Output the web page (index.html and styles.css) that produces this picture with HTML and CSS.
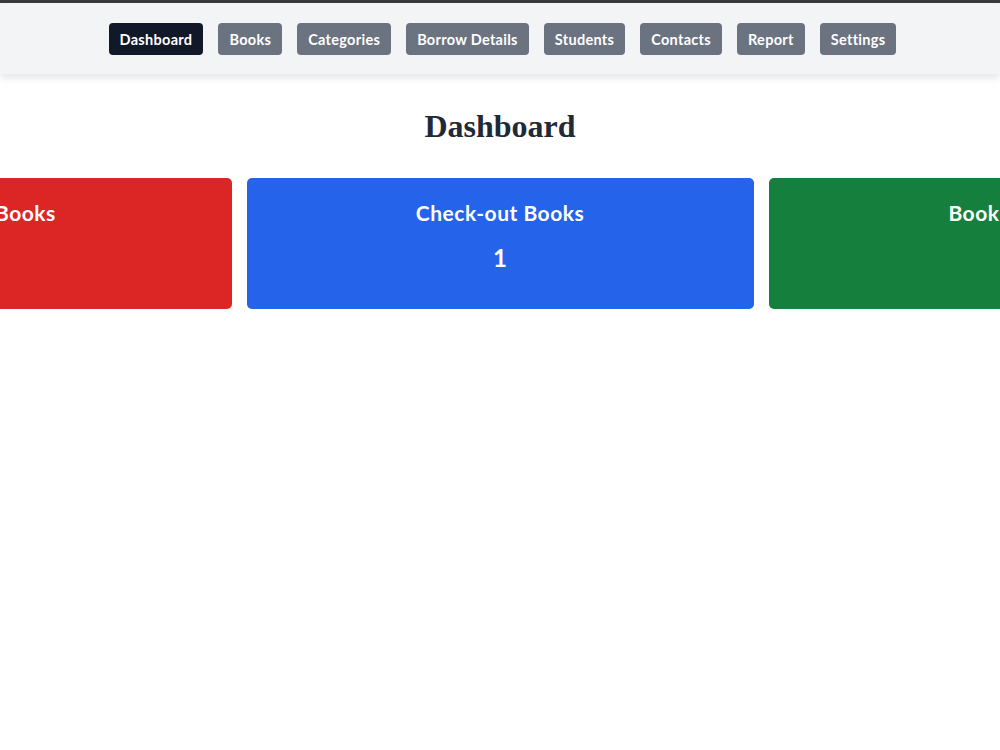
FILE: index.html
```html
<!DOCTYPE html>
<html lang="en">
<head>
<meta charset="utf-8">
<title>Dashboard</title>
<link rel="stylesheet" href="styles.css">
</head>
<body>
<div class="topline"></div>
<nav class="navbar">
  <a class="nav-btn active" href="#">Dashboard</a>
  <a class="nav-btn" href="#">Books</a>
  <a class="nav-btn" href="#">Categories</a>
  <a class="nav-btn" href="#">Borrow Details</a>
  <a class="nav-btn" href="#">Students</a>
  <a class="nav-btn" href="#">Contacts</a>
  <a class="nav-btn" href="#">Report</a>
  <a class="nav-btn" href="#">Settings</a>
</nav>
<main class="content">
  <h1 class="page-title">Dashboard</h1>
  <div class="cards">
    <div class="card card-red">
      <h2 class="card-title">Available Books</h2>
      <p class="card-value">5</p>
    </div>
    <div class="card card-blue">
      <h2 class="card-title">Check-out Books</h2>
      <p class="card-value">1</p>
    </div>
    <div class="card card-green">
      <h2 class="card-title">Booking Books</h2>
      <p class="card-value">0</p>
    </div>
  </div>
</main>
</body>
</html>
```
FILE: styles.css
```css
html, body {
  margin: 0;
  padding: 0;
  background: #ffffff;
  overflow: hidden;
}
body {
  font-family: "Lato", "Noto Sans", sans-serif;
  width: 1000px;
  height: 750px;
}
.topline {
  height: 3px;
  background: #3b3b3b;
}
.navbar {
  background: #f3f4f6;
  height: 71px;
  box-sizing: border-box;
  padding: 20px 0 0 5px;
  display: flex;
  justify-content: center;
  align-items: flex-start;
  gap: 15px;
  box-shadow: 0 4px 8px rgba(0, 0, 0, 0.10);
  position: relative;
  z-index: 1;
}
.nav-btn {
  display: block;
  height: 32px;
  line-height: 33px;
  padding: 0 11px;
  border-radius: 4px;
  background: #6b7280;
  color: #ffffff;
  font-size: 14.5px;
  letter-spacing: 0.3px;
  font-weight: 700;
  text-decoration: none;
}
.nav-btn.active {
  background: #111827;
}
.content {
  padding-top: 32px;
}
.page-title {
  margin: 0;
  text-align: center;
  font-family: "Liberation Serif", "Times New Roman", serif;
  font-size: 32px;
  font-weight: 700;
  line-height: 40px;
  color: #1f2937;
}
.cards {
  margin-top: 32px;
  display: flex;
  justify-content: center;
  gap: 15px;
}
.card {
  flex: 0 0 507px;
  height: 131px;
  box-sizing: border-box;
  padding-top: 21px;
  border-radius: 5px;
  color: #ffffff;
  text-align: center;
}
.card-red { background: #dc2626; }
.card-blue { background: #2563eb; }
.card-green { background: #15803d; }
.card-title {
  margin: 0;
  font-size: 21px;
  letter-spacing: 0.5px;
  line-height: 28px;
  font-weight: 700;
}
.card-value {
  margin: 15px 0 0;
  font-size: 24px;
  line-height: 32px;
  font-weight: 700;
}
```
